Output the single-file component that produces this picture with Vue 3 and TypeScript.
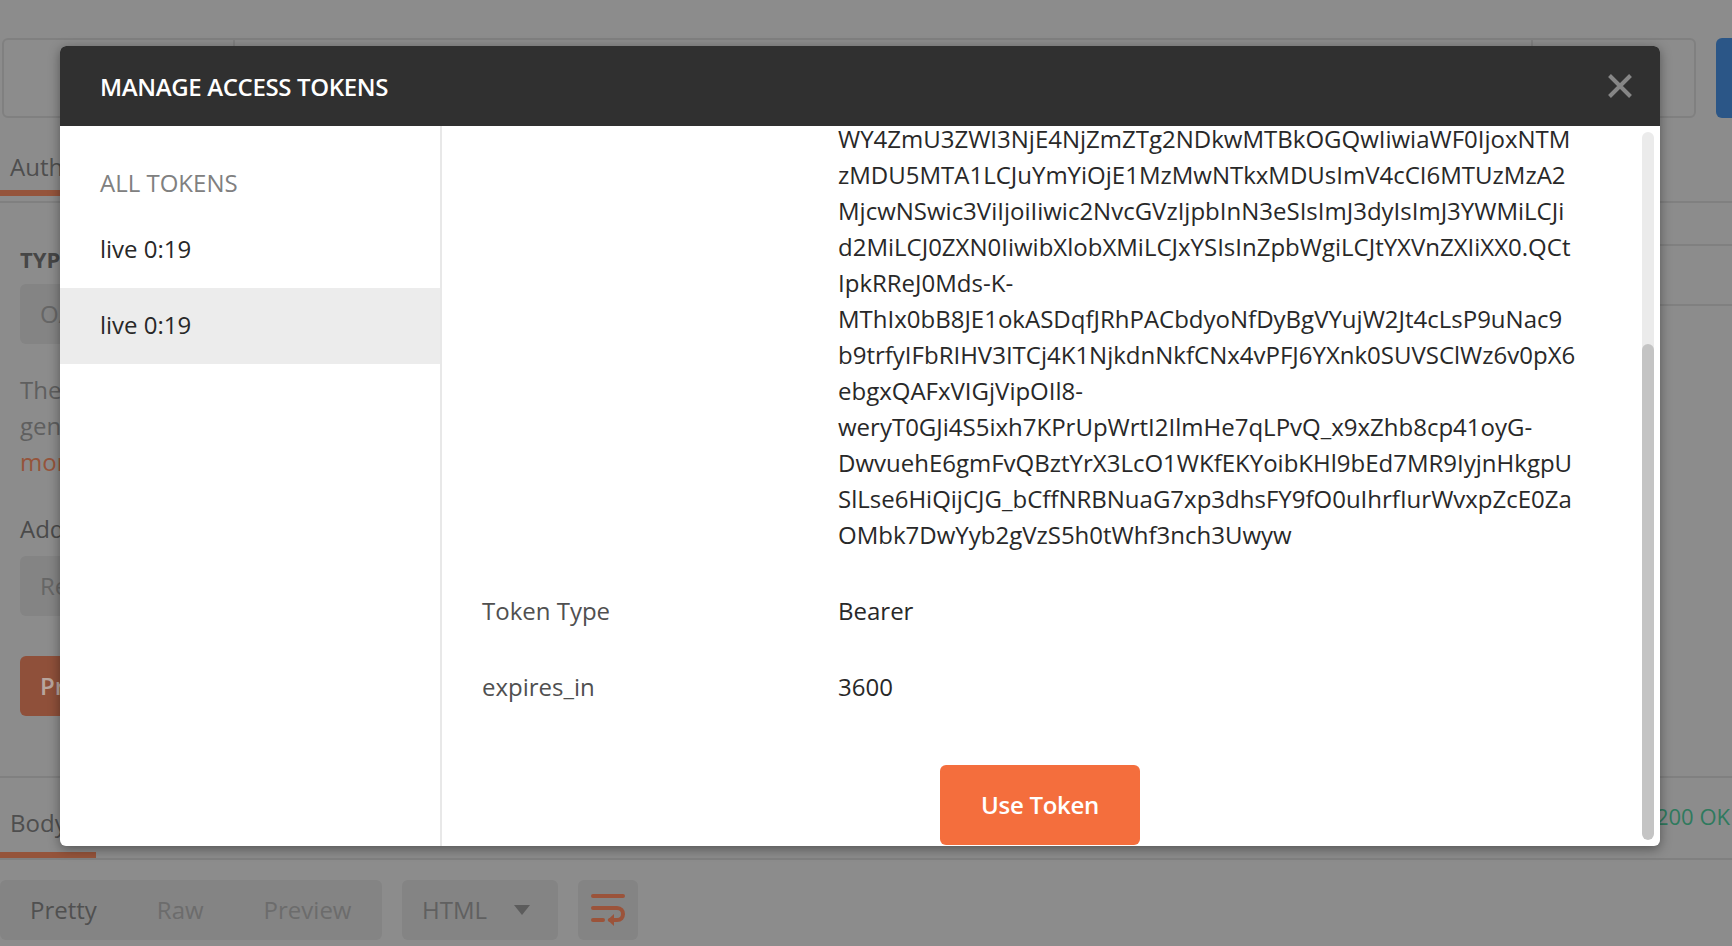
<script setup lang="ts">
const tokenLines: string[] = [
  'WY4ZmU3ZWI3NjE4NjZmZTg2NDkwMTBkOGQwIiwiaWF0IjoxNTM',
  'zMDU5MTA1LCJuYmYiOjE1MzMwNTkxMDUsImV4cCI6MTUzMzA2',
  'MjcwNSwic3ViIjoiIiwic2NvcGVzIjpbInN3eSIsImJ3dyIsImJ3YWMiLCJi',
  'd2MiLCJ0ZXN0IiwibXlobXMiLCJxYSIsInZpbWgiLCJtYXVnZXIiXX0.QCt',
  'IpkRReJ0Mds-K-',
  'MThIx0bB8JE1okASDqfJRhPACbdyoNfDyBgVYujW2Jt4cLsP9uNac9',
  'b9trfyIFbRIHV3ITCj4K1NjkdnNkfCNx4vPFJ6YXnk0SUVSClWz6v0pX6',
  'ebgxQAFxVIGjVipOIl8-',
  'weryT0GJi4S5ixh7KPrUpWrtI2IlmHe7qLPvQ_x9xZhb8cp41oyG-',
  'DwvuehE6gmFvQBztYrX3LcO1WKfEKYoibKHl9bEd7MR9IyjnHkgpU',
  'SlLse6HiQijCJG_bCffNRBNuaG7xp3dhsFY9fO0uIhrfIurWvxpZcE0Za',
  'OMbk7DwYyb2gVzS5h0tWhf3nch3Uwyw'
]
const rows = [
  { label: 'Token Type', value: 'Bearer' },
  { label: 'expires_in', value: '3600' }
]
</script>

<template>
  <div class="page">
    <div class="url-row">
      <div class="url-box">
        <div class="url-cell first"></div>
        <div class="url-cell grow"></div>
        <div class="url-cell last"></div>
      </div>
      <div class="send"></div>
    </div>

    <div class="tabs">
      <div class="tab">Authorization</div>
    </div>

    <div class="request">
      <div class="auth-left">
        <div class="type-label">TYPE</div>
        <div class="field">OAuth 2.0</div>
        <p class="help">The authorization data will be used<br />generated token<br /><span class="more">more</span></p>
        <div class="add-label">Add authorization data to</div>
        <div class="field muted">Request Headers</div>
        <div class="preview-btn">Preview Request</div>
      </div>
      <div class="auth-right">
        <div class="line-row one"></div>
        <div class="line-row two"></div>
      </div>
    </div>

    <div class="response-tabs">
      <div class="body-tab">Body</div>
      <div class="status">200 OK</div>
    </div>

    <div class="viewer">
      <div class="segmented">
        <span class="seg active">Pretty</span>
        <span class="seg raw">Raw</span>
        <span class="seg prev">Preview</span>
      </div>
      <div class="lang">
        <span>HTML</span>
        <i class="caret"></i>
      </div>
      <div class="wrap">
        <svg width="36" height="34" viewBox="0 0 36 34" fill="none" stroke="#9b533a" stroke-width="4" stroke-linecap="round">
          <path d="M3 3H33" />
          <path d="M3 15H27C31 15 33 18 33 21C33 24.500 31 27 27 27H20" />
          <path d="M3 27H13" />
          <path d="M24 21L17.500 27L24 33Z" fill="#9b533a" stroke="none" />
        </svg>
      </div>
    </div>

    <div class="modal">
      <header class="modal-head">
        <h1 class="modal-title">MANAGE ACCESS TOKENS</h1>
        <svg class="close" width="24" height="24" viewBox="0 0 24 24" fill="none" stroke="#868686" stroke-width="4">
          <path d="M1.500 1.500L22.500 22.500M22.500 1.500L1.500 22.500" />
        </svg>
      </header>
      <div class="modal-body">
        <aside class="sidebar">
          <div class="side-title">ALL TOKENS</div>
          <div class="side-item">live 0:19</div>
          <div class="side-item selected">live 0:19</div>
        </aside>
        <section class="detail">
          <div class="scroll-content">
            <div class="token-lines">
              <div v-for="line in tokenLines" :key="line">{{ line }}</div>
            </div>
            <div v-for="row in rows" :key="row.label" class="kv">
              <span class="k">{{ row.label }}</span>
              <span class="v">{{ row.value }}</span>
            </div>
            <div class="actions">
              <button class="use-token">Use Token</button>
            </div>
          </div>
          <div class="scrollbar"><div class="thumb"></div></div>
        </section>
      </div>
    </div>
  </div>
</template>

<style>
html, body { margin: 0; padding: 0; }
</style>

<style scoped>
.page {
  position: relative;
  width: 1732px;
  height: 946px;
  overflow: hidden;
  background: #8c8c8c;
  font-family: "Open Sans", "DejaVu Sans", sans-serif;
  font-size: 24px;
  line-height: 36px;
  display: flex;
  flex-direction: column;
}
.url-row {
  display: flex;
  gap: 20px;
  padding: 38px 0 0 2px;
  height: 80px;
  flex: none;
}
.url-box {
  width: 1694px;
  height: 80px;
  flex: none;
  box-sizing: border-box;
  border: 2px solid #808080;
  border-radius: 6px;
  display: flex;
}
.url-cell.first { width: 229px; border-right: 2px solid #808080; }
.url-cell.grow { flex: 1; border-right: 2px solid #808080; }
.url-cell.last { width: 161px; }
.send {
  width: 40px;
  height: 80px;
  flex: none;
  background: #2b5687;
  border-radius: 6px;
}
.tabs {
  flex: none;
  height: 85px;
  box-sizing: border-box;
  border-bottom: 2px solid #808080;
  position: relative;
}
.tab {
  position: relative;
  display: inline-block;
  height: 78px;
  box-sizing: border-box;
  padding: 31px 40px 0 10px;
  color: #4e4e4e;
  border-bottom: 6px solid #95543b;
}
.request {
  flex: 1;
  display: flex;
  min-height: 0;
}
.auth-left { width: 800px; padding: 38px 0 0 20px; box-sizing: border-box; }
.type-label { color: #464646; font-weight: 700; font-size: 22px; }
.field {
  width: 400px;
  height: 60px;
  box-sizing: border-box;
  margin-top: 7px;
  padding: 12px 20px;
  background: #848484;
  border-radius: 6px;
  color: #666666;
}
.help { margin: 28px 0 0; color: #5f5f5f; white-space: nowrap; }
.more { color: #95543b; }
.add-label { margin-top: 31px; color: #4a4a4a; }
.field.muted { margin-top: 9px; color: #666666; }
.preview-btn {
  width: 260px;
  height: 60px;
  box-sizing: border-box;
  margin-top: 40px;
  padding: 12px 20px;
  border-radius: 6px;
  background: #8f503a;
  color: #b8a59d;
  font-weight: 600;
}
.auth-right { flex: 1; }
.line-row { border-bottom: 2px solid #808080; }
.line-row.one { height: 41px; }
.line-row.two { height: 58px; }
.response-tabs {
  flex: none;
  height: 84px;
  box-sizing: border-box;
  border-top: 2px solid #808080;
  border-bottom: 2px solid #808080;
  position: relative;
  display: flex;
  justify-content: space-between;
}
.body-tab {
  width: 86px;
  padding: 27px 0 0 10px;
  height: 47px;
  color: #4e4e4e;
  border-bottom: 6px solid #95543b;
}
.status { color: #2f7a5e; font-size: 22px; padding: 20px 2px 0 0; white-space: nowrap; }
.viewer {
  flex: none;
  height: 86px;
  box-sizing: border-box;
  padding-top: 20px;
  display: flex;
  gap: 20px;
}
.segmented {
  width: 382px;
  height: 60px;
  background: #848484;
  border-radius: 6px;
  position: relative;
  display: flex;
  align-items: center;
  color: #6c6c6c;
}
.seg.active { margin-left: 30px; color: #505050; }
.seg.raw { margin-left: 60px; }
.seg.prev { margin-left: 60px; }
.lang {
  width: 156px;
  height: 60px;
  background: #848484;
  border-radius: 6px;
  display: flex;
  align-items: center;
  padding-left: 20px;
  box-sizing: border-box;
  color: #606060;
}
.caret {
  width: 0;
  height: 0;
  margin-left: 27px;
  border-left: 8px solid transparent;
  border-right: 8px solid transparent;
  border-top: 10px solid #5c5c5c;
}
.wrap {
  width: 60px;
  height: 60px;
  background: #848484;
  border-radius: 6px;
  display: flex;
  align-items: center;
  justify-content: center;
}
.modal {
  position: absolute;
  left: 60px;
  top: 46px;
  width: 1600px;
  height: 800px;
  background: #fff;
  border-radius: 6px;
  box-shadow: 0 3px 12px rgba(0, 0, 0, 0.4);
  display: flex;
  flex-direction: column;
  overflow: hidden;
}
.modal-head {
  flex: none;
  height: 80px;
  background: #303030;
  display: flex;
  align-items: center;
  justify-content: space-between;
  padding: 0 28px 0 40px;
}
.modal-title {
  margin: 2px 0 0;
  font-size: 24px;
  font-weight: 600;
  letter-spacing: -0.35px;
  color: #fff;
}
.modal-body { flex: 1; display: flex; min-height: 0; }
.sidebar {
  width: 382px;
  flex: none;
  box-sizing: border-box;
  border-right: 2px solid #e8e8e8;
  padding-top: 39px;
}
.side-title { padding-left: 40px; color: #808080; height: 47px; }
.side-item {
  height: 74px;
  padding: 0 40px 2px;
  display: flex;
  align-items: center;
  color: #282828;
}
.side-item.selected { background: #ececec; }
.detail { flex: 1; position: relative; overflow: hidden; min-width: 0; }
.scroll-content { margin-top: -5px; padding: 0 40px; }
.token-lines { margin-left: 356px; color: #282828; white-space: nowrap; }
.kv { display: flex; margin-top: 40px; }
.k { width: 356px; color: #505050; }
.v { color: #282828; }
.actions { display: flex; justify-content: center; margin-top: 60px; padding-right: 22px; }
.use-token {
  width: 200px;
  height: 80px;
  border: 0;
  border-radius: 6px;
  background: #f46e3d;
  color: #fff;
  font: 600 24px/36px "Open Sans", "DejaVu Sans", sans-serif;
  letter-spacing: -0.3px;
}
.scrollbar {
  position: absolute;
  right: 6px;
  top: 6px;
  width: 12px;
  height: 708px;
  background: #ebebeb;
  border-radius: 6px;
  overflow: hidden;
}
.thumb {
  position: absolute;
  left: 0;
  right: 0;
  top: 212px;
  bottom: 0;
  background: #c4c4c4;
  border-radius: 6px;
}
</style>
